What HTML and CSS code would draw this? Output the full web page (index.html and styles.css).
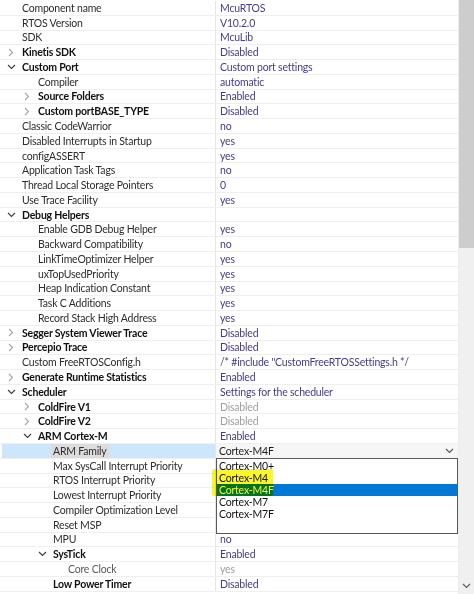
FILE: index.html
```html
<!DOCTYPE html>
<html lang="en">
<head>
    <meta charset="UTF-8">
    <title>Component Inspector - McuRTOS</title>
    <link rel="stylesheet" href="styles.css">
</head>
<body>
    <div class="inspector">
        <div class="tree">
            <div class="row"><div class="name l0"><span class="tw"></span>Component name</div><div class="val">McuRTOS</div></div>
            <div class="row"><div class="name l0"><span class="tw"></span>RTOS Version</div><div class="val">V10.2.0</div></div>
            <div class="row"><div class="name l0"><span class="tw"></span>SDK</div><div class="val">McuLib</div></div>
            <div class="row"><div class="name l0 grp"><span class="tw closed"><svg width="6" height="9" viewBox="0 0 6 9"><path d="M1 1l3.5 3.5L1 8"/></svg></span>Kinetis SDK</div><div class="val">Disabled</div></div>
            <div class="row"><div class="name l0 grp"><span class="tw open"><svg width="9" height="6" viewBox="0 0 9 6"><path d="M1 1l3.5 3.5L8 1"/></svg></span>Custom Port</div><div class="val">Custom port settings</div></div>
            <div class="row"><div class="name l1"><span class="tw"></span>Compiler</div><div class="val">automatic</div></div>
            <div class="row"><div class="name l1 grp"><span class="tw closed"><svg width="6" height="9" viewBox="0 0 6 9"><path d="M1 1l3.5 3.5L1 8"/></svg></span>Source Folders</div><div class="val">Enabled</div></div>
            <div class="row"><div class="name l1 grp"><span class="tw closed"><svg width="6" height="9" viewBox="0 0 6 9"><path d="M1 1l3.5 3.5L1 8"/></svg></span>Custom portBASE_TYPE</div><div class="val">Disabled</div></div>
            <div class="row"><div class="name l0"><span class="tw"></span>Classic CodeWarrior</div><div class="val">no</div></div>
            <div class="row"><div class="name l0"><span class="tw"></span>Disabled Interrupts in Startup</div><div class="val">yes</div></div>
            <div class="row"><div class="name l0"><span class="tw"></span>configASSERT</div><div class="val">yes</div></div>
            <div class="row"><div class="name l0"><span class="tw"></span>Application Task Tags</div><div class="val">no</div></div>
            <div class="row"><div class="name l0"><span class="tw"></span>Thread Local Storage Pointers</div><div class="val">0</div></div>
            <div class="row"><div class="name l0"><span class="tw"></span>Use Trace Facility</div><div class="val">yes</div></div>
            <div class="row"><div class="name l0 grp"><span class="tw open"><svg width="9" height="6" viewBox="0 0 9 6"><path d="M1 1l3.5 3.5L8 1"/></svg></span>Debug Helpers</div><div class="val"></div></div>
            <div class="row"><div class="name l1"><span class="tw"></span>Enable GDB Debug Helper</div><div class="val">yes</div></div>
            <div class="row"><div class="name l1"><span class="tw"></span>Backward Compatibility</div><div class="val">no</div></div>
            <div class="row"><div class="name l1"><span class="tw"></span>LinkTimeOptimizer Helper</div><div class="val">yes</div></div>
            <div class="row"><div class="name l1"><span class="tw"></span>uxTopUsedPriority</div><div class="val">yes</div></div>
            <div class="row"><div class="name l1"><span class="tw"></span>Heap Indication Constant</div><div class="val">yes</div></div>
            <div class="row"><div class="name l1"><span class="tw"></span>Task C Additions</div><div class="val">yes</div></div>
            <div class="row"><div class="name l1"><span class="tw"></span>Record Stack High Address</div><div class="val">yes</div></div>
            <div class="row"><div class="name l0 grp"><span class="tw closed"><svg width="6" height="9" viewBox="0 0 6 9"><path d="M1 1l3.5 3.5L1 8"/></svg></span>Segger System Viewer Trace</div><div class="val">Disabled</div></div>
            <div class="row"><div class="name l0 grp"><span class="tw closed"><svg width="6" height="9" viewBox="0 0 6 9"><path d="M1 1l3.5 3.5L1 8"/></svg></span>Percepio Trace</div><div class="val">Disabled</div></div>
            <div class="row"><div class="name l0"><span class="tw"></span>Custom FreeRTOSConfig.h</div><div class="val">/* #include "CustomFreeRTOSSettings.h */</div></div>
            <div class="row"><div class="name l0 grp"><span class="tw closed"><svg width="6" height="9" viewBox="0 0 6 9"><path d="M1 1l3.5 3.5L1 8"/></svg></span>Generate Runtime Statistics</div><div class="val">Enabled</div></div>
            <div class="row"><div class="name l0 grp"><span class="tw open"><svg width="9" height="6" viewBox="0 0 9 6"><path d="M1 1l3.5 3.5L8 1"/></svg></span>Scheduler</div><div class="val">Settings for the scheduler</div></div>
            <div class="row"><div class="name l1 grp"><span class="tw closed"><svg width="6" height="9" viewBox="0 0 6 9"><path d="M1 1l3.5 3.5L1 8"/></svg></span>ColdFire V1</div><div class="val dis">Disabled</div></div>
            <div class="row"><div class="name l1 grp"><span class="tw closed"><svg width="6" height="9" viewBox="0 0 6 9"><path d="M1 1l3.5 3.5L1 8"/></svg></span>ColdFire V2</div><div class="val dis">Disabled</div></div>
            <div class="row"><div class="name l1 grp"><span class="tw open"><svg width="9" height="6" viewBox="0 0 9 6"><path d="M1 1l3.5 3.5L8 1"/></svg></span>ARM Cortex-M</div><div class="val">Enabled</div></div>
            <div class="row selected"><div class="name l2"><span class="tw"></span><span class="focus">ARM Family</span></div><div class="val"><div class="combo">Cortex-M4F<svg width="9" height="6" viewBox="0 0 9 6"><path d="M1 1l3.5 3.5L8 1"/></svg></div></div></div>
            <div class="row"><div class="name l2"><span class="tw"></span>Max SysCall Interrupt Priority</div><div class="val"></div></div>
            <div class="row"><div class="name l2"><span class="tw"></span>RTOS Interrupt Priority</div><div class="val"></div></div>
            <div class="row"><div class="name l2"><span class="tw"></span>Lowest Interrupt Priority</div><div class="val"></div></div>
            <div class="row"><div class="name l2"><span class="tw"></span>Compiler Optimization Level</div><div class="val"></div></div>
            <div class="row"><div class="name l2"><span class="tw"></span>Reset MSP</div><div class="val"></div></div>
            <div class="row"><div class="name l2"><span class="tw"></span>MPU</div><div class="val">no</div></div>
            <div class="row"><div class="name l2 grp"><span class="tw open"><svg width="9" height="6" viewBox="0 0 9 6"><path d="M1 1l3.5 3.5L8 1"/></svg></span>SysTick</div><div class="val">Enabled</div></div>
            <div class="row"><div class="name l3 muted"><span class="tw"></span>Core Clock</div><div class="val dis">yes</div></div>
            <div class="row"><div class="name l2 grp"><span class="tw"></span>Low Power Timer</div><div class="val">Disabled</div></div>
        </div>

        <div class="vscroll">
            <div class="thumb"></div>
            <div class="track"></div>
            <div class="arrow"><svg width="9" height="6" viewBox="0 0 9 6"><path d="M1 1l3.5 3.5L8 1"/></svg></div>
        </div>

        <!-- open drop-down of the ARM Family combo -->
        <ul class="popup">
            <li>Cortex-M0+</li>
            <li>Cortex-M4</li>
            <li class="current">Cortex-M4F</li>
            <li>Cortex-M7</li>
            <li>Cortex-M7F</li>
        </ul>

        <!-- highlighter mark drawn over the screenshot -->
        <div class="marker"></div>
    </div>
</body>
</html>
```

FILE: styles.css
```css
* {
    margin: 0;
    padding: 0;
    box-sizing: border-box;
}

body {
    font-family: Lato, "Noto Sans", sans-serif;
    font-size: 10.5px;
    letter-spacing: -0.2px;
    background: #ffffff;
    color: #2d2d2d;
}

.inspector {
    position: relative;
    display: flex;
    width: 474px;
    height: 594px;
    overflow: hidden;
}

.tree {
    width: 459px;
    padding-top: 1px;
    border-right: 1px solid #ececec;
}

.row {
    display: grid;
    grid-template-columns: 215px 1fr;
    height: 14.77px;
    border-bottom: 1px solid #efefef;
}

.name {
    display: flex;
    align-items: center;
    white-space: nowrap;
    overflow: hidden;
}

.l0 { padding-left: 6px; }
.l1 { padding-left: 22px; }
.l2 { padding-left: 37px; }
.l3 { padding-left: 52px; }

.tw {
    width: 10px;
    margin-right: 6px;
    display: flex;
    justify-content: center;
    align-items: center;
    flex-shrink: 0;
}

.tw svg path {
    fill: none;
    stroke-width: 1.1;
}

.tw.closed svg path { stroke: #a6a6a6; }
.tw.open svg path { stroke: #3c3c3c; }

.grp {
    font-weight: 700;
    color: #111111;
}

.muted {
    color: #5a5a5a;
}

.val {
    display: flex;
    align-items: center;
    padding-left: 4px;
    border-left: 1px solid #e6e6e6;
    color: #463c8c;
    white-space: nowrap;
}

.val.dis {
    color: #a0a0a0;
}

.selected .name {
    background: #cce6fb;
    margin-left: 2px;
    padding-left: 35px;
}

.focus {
    background: #dcdcdc;
    padding: 0 2px;
    margin-left: -2px;
    line-height: 14px;
}

.selected .val {
    padding-left: 0;
}

.combo {
    flex: 1;
    height: 100%;
    display: flex;
    align-items: center;
    justify-content: space-between;
    padding: 0 4px 0 3px;
    background: #f6f6f6;
    color: #1a1a1a;
}

.combo svg path {
    fill: none;
    stroke: #555555;
    stroke-width: 1.1;
}

.vscroll {
    width: 15px;
    display: flex;
    flex-direction: column;
    background: #f0f0f0;
}

.thumb {
    height: 248px;
    background: #cdcdcd;
}

.track {
    flex: 1;
}

.arrow {
    height: 17px;
    display: flex;
    align-items: center;
    justify-content: center;
}

.arrow svg path {
    fill: none;
    stroke: #606060;
    stroke-width: 1.2;
}

.popup {
    position: absolute;
    left: 216px;
    top: 458px;
    width: 242px;
    height: 76px;
    list-style: none;
    background: #ffffff;
    border: 1px solid #5a5a5a;
    padding-top: 1px;
    color: #111111;
}

.popup li {
    height: 12px;
    line-height: 12px;
    padding-left: 2px;
}

.popup li.current {
    background: #0078d7;
    color: #ffffff;
}

.marker {
    position: absolute;
    left: 212px;
    top: 469px;
    width: 61px;
    height: 27px;
    background: #fbf52a;
    mix-blend-mode: multiply;
    border-radius: 2px;
}
```
